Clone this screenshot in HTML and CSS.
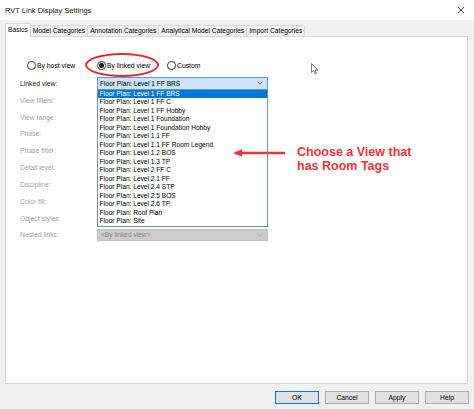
FILE: index.html
```html
<!DOCTYPE html>
<html>
<head>
<meta charset="utf-8">
<link rel="stylesheet" href="styles.css">
</head>
<body>
<div class="window">
  <div class="titlebar">
    <span class="title">RVT Link Display Settings</span>
    <svg class="close" width="8" height="8" viewBox="0 0 8 8"><path d="M1 1L7 7M7 1L1 7" stroke="#333" stroke-width="0.9" fill="none"/></svg>
  </div>
  <div class="tabs">
    <div class="tab active">Basics</div>
    <div class="tab">Model Categories</div>
    <div class="tab">Annotation Categories</div>
    <div class="tab">Analytical Model Categories</div>
    <div class="tab">Import Categories</div>
  </div>
  <div class="panel">
    <div class="radios">
      <label class="radio"><span class="dot"></span>By host view</label>
      <label class="radio"><span class="dot checked"></span>By linked view</label>
      <label class="radio"><span class="dot"></span>Custom</label>
    </div>
    <div class="form">
      <div class="lbl">Linked view:</div>
      <div class="ctl">
        <div class="combo active">
          <span>Floor Plan: Level 1 FF BRS</span>
          <svg class="chev" width="6" height="4" viewBox="0 0 6 4"><path d="M0.5 0.8L3 3.2L5.5 0.8" stroke="#555" stroke-width="0.8" fill="none"/></svg>
          <ul class="list">
            <li class="sel">Floor Plan: Level 1 FF BRS</li>
            <li>Floor Plan: Level 1 FF C</li>
            <li>Floor Plan: Level 1 FF Hobby</li>
            <li>Floor Plan: Level 1 Foundation</li>
            <li>Floor Plan: Level 1 Foundation Hobby</li>
            <li>Floor Plan: Level 1.1 FF</li>
            <li>Floor Plan: Level 1.1 FF Room Legend</li>
            <li>Floor Plan: Level 1.2 BOS</li>
            <li>Floor Plan: Level 1.3 TP</li>
            <li>Floor Plan: Level 2 FF C</li>
            <li>Floor Plan: Level 2.1 FF</li>
            <li>Floor Plan: Level 2.4 STP</li>
            <li>Floor Plan: Level 2.5 BOS</li>
            <li>Floor Plan: Level 2.6 TP</li>
            <li>Floor Plan: Roof Plan</li>
            <li>Floor Plan: Site</li>
          </ul>
        </div>
      </div>
      <div class="lbl dis">View filters:</div><div class="ctl"></div>
      <div class="lbl dis">View range:</div><div class="ctl"></div>
      <div class="lbl dis">Phase:</div><div class="ctl"></div>
      <div class="lbl dis">Phase filter:</div><div class="ctl"></div>
      <div class="lbl dis">Detail level:</div><div class="ctl"></div>
      <div class="lbl dis">Discipline:</div><div class="ctl"></div>
      <div class="lbl dis">Color fill:</div><div class="ctl"></div>
      <div class="lbl dis">Object styles:</div><div class="ctl"></div>
      <div class="lbl dis">Nested links:</div>
      <div class="ctl">
        <div class="combo disabled">
          <span>&lt;By linked view&gt;</span>
          <svg class="chev" width="6" height="4" viewBox="0 0 6 4"><path d="M0.5 0.8L3 3.2L5.5 0.8" stroke="#a8a8a8" stroke-width="0.8" fill="none"/></svg>
        </div>
      </div>
    </div>

    <div class="ellipse"></div>
    <svg class="arrow" width="54" height="10" viewBox="0 0 54 10"><path d="M8 5H52" stroke="#e8353d" stroke-width="2.4"/><path d="M0 5L9 1.2V8.8Z" fill="#e8353d"/></svg>
    <div class="note">Choose a View that<br>has Room Tags</div>
    <svg class="cursor" width="8" height="12" viewBox="0 0 8 12"><path d="M0.5 0.5V9.5L2.6 7.6L4.1 11L5.4 10.4L4 7.1H7Z" fill="#fff" stroke="#444" stroke-width="0.7" stroke-linejoin="round"/></svg>
  </div>
  <div class="footer">
    <button class="btn default">OK</button>
    <button class="btn">Cancel</button>
    <button class="btn">Apply</button>
    <button class="btn">Help</button>
  </div>
</div>
</body>
</html>
```

FILE: styles.css
```css
html, body {
  margin: 0;
  padding: 0;
}
body {
  width: 474px;
  height: 409px;
  overflow: hidden;
  background: #f0f0f0;
  font-family: "Liberation Sans", Arial, sans-serif;
  color: #000;
}
.window {
  width: 474px;
  height: 409px;
  display: flex;
  flex-direction: column;
}
.titlebar {
  height: 20px;
  flex: none;
  background: #fff;
  display: flex;
  align-items: center;
  justify-content: space-between;
  padding: 0 9px 0 5px;
}
.title {
  font-size: 7.5px;
  color: #1a1a1a;
}
.close {
  display: block;
}
.tabs {
  height: 16px;
  flex: none;
  display: flex;
  align-items: flex-end;
  padding-left: 5px;
}
.tab {
  height: 11px;
  box-sizing: border-box;
  border: 1px solid #d9d9d9;
  border-bottom: none;
  margin-right: -1px;
  padding: 0 2px;
  font-size: 6.7px;
  line-height: 10px;
  background: #f0f0f0;
  white-space: nowrap;
}
.tab.active {
  height: 14px;
  margin-bottom: -1px;
  background: #fff;
  position: relative;
  z-index: 1;
  line-height: 12px;
}
.panel {
  position: relative;
  height: 348px;
  flex: none;
  box-sizing: border-box;
  margin: 0 6px 0 5px;
  background: #fff;
  border: 1px solid #d9d9d9;
  padding-top: 22.7px;
}
.radios {
  display: grid;
  grid-template-columns: repeat(3, 70px);
  height: 12px;
  padding-left: 21px;
  align-items: center;
}
.radio {
  display: flex;
  align-items: center;
  gap: 1.5px;
  font-size: 6.8px;
}
.dot {
  width: 8.5px;
  height: 8.5px;
  box-sizing: border-box;
  border: 1px solid #333;
  border-radius: 50%;
  background: #fff;
  display: flex;
  align-items: center;
  justify-content: center;
}
.dot.checked::after {
  content: "";
  width: 4.5px;
  height: 4.5px;
  border-radius: 50%;
  background: #1a1a1a;
}
.form {
  margin-top: 3.4px;
  margin-left: 14px;
  display: grid;
  grid-template-columns: 77px 171px;
  grid-auto-rows: 16.83px;
  align-items: center;
}
.lbl {
  font-size: 6.8px;
  color: #222;
}
.lbl.dis {
  color: #a3a3a3;
}
.combo {
  position: relative;
  height: 12.5px;
  box-sizing: border-box;
  display: flex;
  align-items: center;
  justify-content: space-between;
  padding: 0 4px 0 2px;
  font-size: 6.6px;
}
.combo.active {
  background: #cce4f7;
  border: 1px solid #5e9ad6;
}
.combo.disabled {
  background: #cccccc;
  border: 1px solid #bfbfbf;
  color: #858585;
  padding-left: 3px;
}
.chev {
  display: block;
}
.list {
  position: absolute;
  left: -1px;
  right: -1px;
  top: 100%;
  margin: 0;
  padding: 0;
  list-style: none;
  background: #fff;
  border: 1px solid #7390b8;
  z-index: 2;
}
.list li {
  height: 8.5px;
  line-height: 8.5px;
  padding-left: 1.5px;
  font-size: 6.6px;
  white-space: nowrap;
}
.list li.sel {
  background: #0078d7;
  color: #fff;
}
.ellipse {
  position: absolute;
  left: 79px;
  top: 16px;
  width: 74px;
  height: 24px;
  box-sizing: border-box;
  border: 2.6px solid #e3262d;
  border-radius: 50%;
  z-index: 3;
}
.arrow {
  position: absolute;
  left: 227px;
  top: 110.7px;
  z-index: 3;
}
.note {
  position: absolute;
  left: 291px;
  top: 107.6px;
  font-size: 12.5px;
  line-height: 14.7px;
  font-weight: bold;
  color: #e8353d;
  white-space: nowrap;
  z-index: 3;
}
.cursor {
  position: absolute;
  left: 305px;
  top: 26px;
  z-index: 3;
}
.footer {
  flex: 1;
  display: flex;
  justify-content: flex-end;
  align-items: flex-start;
  gap: 6px;
  padding: 7px 5px 0 0;
}
.btn {
  width: 44px;
  height: 12.5px;
  box-sizing: border-box;
  margin: 0;
  padding: 0;
  border: 1px solid #adadad;
  background: #e1e1e1;
  font-family: "Liberation Sans", Arial, sans-serif;
  font-size: 6.8px;
  color: #000;
}
.btn.default {
  border-color: #0078d7;
}
```
